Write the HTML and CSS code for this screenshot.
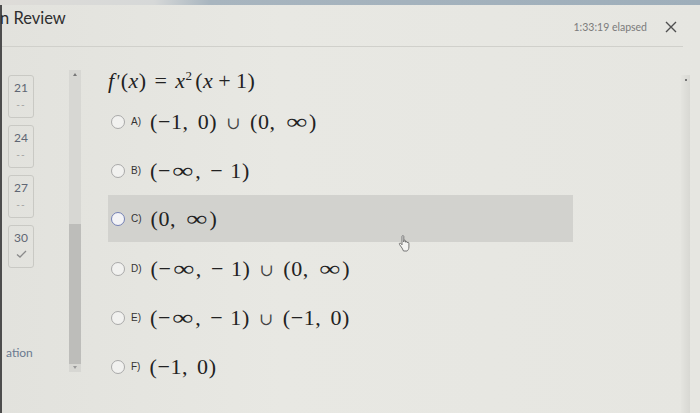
FILE: index.html
```html
<!DOCTYPE html>
<html>
<head>
<meta charset="utf-8">
<link rel="stylesheet" href="styles.css">
</head>
<body>
<div class="strip"></div>
<div class="page">
  <header class="header">
    <h1 class="title">n Review</h1>
    <div class="hright">
      <span class="elapsed">1:33:19 elapsed</span>
      <svg class="close" width="12" height="12" viewBox="0 0 12 12"><path d="M1 1 L11 11 M11 1 L1 11" stroke="#4f4f4f" stroke-width="1.4" fill="none"/></svg>
    </div>
  </header>
  <div class="main">
    <aside class="sidebar">
      <div class="qbox"><span class="qnum">21</span><span class="qstat">--</span></div>
      <div class="qbox"><span class="qnum">24</span><span class="qstat">--</span></div>
      <div class="qbox"><span class="qnum">27</span><span class="qstat">--</span></div>
      <div class="qbox"><span class="qnum">30</span><span class="qstat"><svg width="11" height="8" viewBox="0 0 11 8"><path d="M1 4.5 L4 7 L10 1" stroke="#8a8a8a" stroke-width="1.3" fill="none"/></svg></span></div>
      <div class="navlabel">ation</div>
    </aside>
    <div class="scroll">
      <span class="arr up"></span>
      <div class="thumb"></div>
      <span class="arr down"></span>
    </div>
    <section class="content">
      <div class="question math"><i>f</i><span class="prime">'</span>(<i>x</i>)<span class="rel">=</span><i>x</i><sup>2</sup>(<i>x</i><span class="qbin">+</span>1)</div>
      <div class="options">
        <div class="opt"><span class="radio"></span><span class="lbl">A)</span><span class="math">(−1,<span class="sp"></span>0)<span class="cup">∪</span>(0,<span class="sp"></span><span class="inf">∞</span>)</span></div>
        <div class="opt"><span class="radio"></span><span class="lbl">B)</span><span class="math">(−<span class="inf">∞</span>,<span class="sp"></span><span class="neg">−</span>1)</span></div>
        <div class="opt sel"><span class="radio focus"></span><span class="lbl">C)</span><span class="math">(0,<span class="sp"></span><span class="inf">∞</span>)</span></div>
        <div class="opt"><span class="radio"></span><span class="lbl">D)</span><span class="math">(−<span class="inf">∞</span>,<span class="sp"></span><span class="neg">−</span>1)<span class="cup">∪</span>(0,<span class="sp"></span><span class="inf">∞</span>)</span></div>
        <div class="opt"><span class="radio"></span><span class="lbl">E)</span><span class="math">(−<span class="inf">∞</span>,<span class="sp"></span><span class="neg">−</span>1)<span class="cup">∪</span>(−1,<span class="sp"></span>0)</span></div>
        <div class="opt"><span class="radio"></span><span class="lbl">F)</span><span class="math">(−1,<span class="sp"></span>0)</span></div>
      </div>
    </section>
    <div class="rscroll"><span class="rdot"></span></div>
  </div>
  <svg class="cursor" width="16" height="20" viewBox="0 0 16 20"><path d="M5 14 L2.5 10.5 C1.8 9.5 3 8.6 3.8 9.4 L5 10.8 L5 2.5 C5 1.3 6.8 1.3 6.8 2.5 L6.8 8 L6.8 6.8 C6.8 5.8 8.5 5.8 8.5 6.8 L8.5 8.2 C8.5 7.2 10.2 7.2 10.2 8.2 L10.2 9 C10.2 8 11.9 8 11.9 9 L11.9 13 C11.9 15 11 16.5 10 17 L6.5 17 Z" fill="#f4f4f2" stroke="#6a6a6a" stroke-width="0.9"/></svg>
</div>
</body>
</html>
```

FILE: styles.css
```css
html, body {
  margin: 0;
  padding: 0;
}
body {
  width: 700px;
  height: 413px;
  overflow: hidden;
  background: #e6e6e1;
  font-family: Lato, "Open Sans", sans-serif;
  color: #333;
}
.strip {
  height: 5px;
  background: linear-gradient(to right, #dedcd8 0%, #d6d8d8 22%, #a8b5bf 30%, #9eaeba 100%);
}
.page {
  position: relative;
  height: 408px;
  border-left: 2px solid #4d4d4d;
  background: linear-gradient(to right, #e2e2dd 0%, #e8e8e3 40%, #e6e6e1 100%);
}
.header {
  display: flex;
  justify-content: space-between;
  align-items: flex-start;
  width: 675px;
  height: 41px;
  padding-right: 6px;
  border-bottom: 1px solid #d0d0cb;
}
.title {
  margin: 3px 0 0 -2px;
  font-size: 16.5px;
  line-height: 20px;
  font-weight: 400;
  color: #2e2e2e;
}
.hright {
  display: flex;
  align-items: center;
  margin-top: 15px;
}
.elapsed {
  font-size: 10.5px;
  line-height: 14px;
  color: #7b7b7b;
}
.close {
  margin-left: 18px;
}
.main {
  display: flex;
  align-items: flex-start;
}
.sidebar {
  width: 54px;
  padding: 28px 0 0 6px;
  display: flex;
  flex-direction: column;
  align-items: flex-start;
}
.qbox {
  width: 26px;
  height: 43px;
  border: 1px solid #c9c9c4;
  border-radius: 3px;
  margin-bottom: 7px;
  display: flex;
  flex-direction: column;
  align-items: center;
  padding-top: 5px;
  box-sizing: border-box;
}
.qnum {
  font-size: 12px;
  line-height: 14px;
  color: #5f6673;
}
.qstat {
  margin-top: 2px;
  font-size: 10px;
  line-height: 14px;
  color: #9a9a9a;
  letter-spacing: 1px;
}
.navlabel {
  margin: 70px 0 0 -2px;
  font-size: 12px;
  line-height: 16px;
  color: #6b7a90;
}
.scroll {
  margin: 23px 0 0 7px;
  width: 12px;
  height: 302px;
  background: #d7d7d3;
  display: flex;
  flex-direction: column;
  align-items: center;
}
.arr {
  width: 0;
  height: 0;
  border-left: 2px solid transparent;
  border-right: 2px solid transparent;
}
.arr.up {
  margin-top: 3px;
  border-bottom: 3px solid #777;
}
.arr.down {
  margin-top: 2px;
  border-top: 3px solid #999;
}
.thumb {
  margin-top: 148px;
  width: 12px;
  height: 140px;
  background: #bdbdba;
}
.content {
  margin-left: 27px;
  padding-top: 22px;
  width: 465px;
}
.math {
  font-family: "Liberation Serif", "Times New Roman", serif;
  font-size: 22px;
  color: #222;
  white-space: nowrap;
  letter-spacing: 0.6px;
}
.math i {
  font-style: italic;
}
.question {
  height: 28px;
  line-height: 24px;
  letter-spacing: 0.4px;
}
.prime {
  font-family: "Liberation Serif", serif;
  font-style: italic;
  font-size: 18px;
  margin: 0 1px 0 1px;
}
.question sup {
  font-size: 13px;
  line-height: 0;
  margin-right: 3px;
}
.rel {
  margin: 0 8px;
}
.qbin {
  margin: 0 5px;
}
.cup {
  font-family: "DejaVu Serif", serif;
  font-weight: 300;
  font-size: 17px;
  color: #444;
  margin: 0 9px;
}
.inf {
  display: inline-block;
  transform: scaleX(1.35);
  margin: 0 4px;
}
.neg {
  margin-right: 7px;
}
.sp {
  display: inline-block;
  width: 9px;
}
.options {
  display: flex;
  flex-direction: column;
}
.opt {
  height: 49px;
  display: flex;
  align-items: center;
  padding-left: 3px;
}
.opt.sel {
  background: #d2d2ce;
  height: 47px;
  margin-bottom: 2px;
}
.radio {
  width: 12px;
  height: 12px;
  border: 1.5px solid #a9a9a9;
  border-radius: 50%;
  background: #f1f1ef;
  flex: none;
}
.radio.focus {
  border-color: #7380b5;
  background: #f3f3f6;
}
.lbl {
  margin: 0 9px 0 6px;
  font-family: "Liberation Sans", Arial, sans-serif;
  font-size: 10px;
  color: #333;
}
.rscroll {
  margin: 28px 10px 0 auto;
  width: 9px;
  height: 340px;
  background: linear-gradient(to right, #e4e4df, #d8d8d3);
  display: flex;
  justify-content: center;
}
.rdot {
  margin-top: 4px;
  width: 2px;
  height: 2px;
  background: #777;
}
.cursor {
  position: absolute;
  left: 395px;
  top: 229px;
}
```
